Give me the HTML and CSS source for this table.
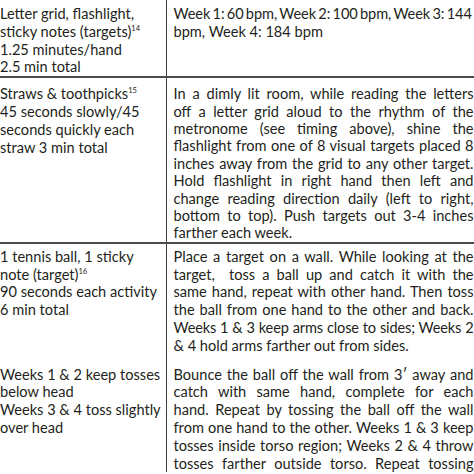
FILE: index.html
```html
<!DOCTYPE html>
<html>
<head>
<meta charset="utf-8">
<link rel="stylesheet" href="styles.css">
</head>
<body>
<div class="page">
  <table class="grid">
    <colgroup><col class="col-a"><col class="col-b"></colgroup>
    <tr class="row row-1">
      <td class="left">Letter grid, flashlight,<br>sticky notes (targets)<sup>14</sup><br>1.25 minutes/hand<br>2.5 min total</td>
      <td class="right">
        <span class="ln narrow">Week 1: 60 bpm, Week 2: 100 bpm, Week 3: 144</span>
        <span class="ln">bpm, Week 4: 184 bpm</span>
      </td>
    </tr>
    <tr class="row row-2">
      <td class="left">Straws &amp; toothpicks<sup>15</sup><br>45 seconds slowly/45<br>seconds quickly each<br>straw 3 min total</td>
      <td class="right">
        <span class="ln j">In a dimly lit room, while reading the letters</span>
        <span class="ln j">off a letter grid aloud to the rhythm of the</span>
        <span class="ln j">metronome (see timing above), shine the</span>
        <span class="ln j">flashlight from one of 8 visual targets placed 8</span>
        <span class="ln j">inches away from the grid to any other target.</span>
        <span class="ln j">Hold flashlight in right hand then left and</span>
        <span class="ln j">change reading direction daily (left to right,</span>
        <span class="ln j">bottom to top). Push targets out 3-4 inches</span>
        <span class="ln">farther each week.</span>
      </td>
    </tr>
    <tr class="row row-3">
      <td class="left">1 tennis ball, 1 sticky<br>note (target)<sup>16</sup><br>90 seconds each activity<br>6 min total</td>
      <td class="right">
        <span class="ln j">Place a target on a wall. While looking at the</span>
        <span class="ln j">target,&nbsp; toss a ball up and catch it with the</span>
        <span class="ln j">same hand, repeat with other hand. Then toss</span>
        <span class="ln j">the ball from one hand to the other and back.</span>
        <span class="ln j tight">Weeks 1 &amp; 3 keep arms close to sides; Weeks 2</span>
        <span class="ln">&amp; 4 hold arms farther out from sides.</span>
      </td>
    </tr>
    <tr class="row row-4">
      <td class="left">Weeks 1 &amp; 2 keep tosses<br>below head<br>Weeks 3 &amp; 4 toss slightly<br>over head</td>
      <td class="right">
        <span class="ln j">Bounce the ball off the wall from 3′ away and</span>
        <span class="ln j">catch with same hand, complete for each</span>
        <span class="ln j">hand. Repeat by tossing the ball off the wall</span>
        <span class="ln j">from one hand to the other. Weeks 1 &amp; 3 keep</span>
        <span class="ln j">tosses inside torso region; Weeks 2 &amp; 4 throw</span>
        <span class="ln j">tosses farther outside torso. Repeat tossing</span>
      </td>
    </tr>
  </table>
</div>
</body>
</html>
```
FILE: styles.css
```css
html, body {
  margin: 0;
  padding: 0;
  background: #ffffff;
}
.page {
  width: 474px;
  height: 474px;
  overflow: hidden;
}
.grid {
  border-collapse: collapse;
  table-layout: fixed;
  width: 474px;
  font-family: "Lato", "Liberation Sans", sans-serif;
  font-size: 14.6px;
  line-height: 17.8px;
  color: #231f20;
}
.col-a { width: 166px; }
.col-b { width: 308px; }
.left, .right {
  vertical-align: top;
  padding: 4px 0 0 0;
}
.left {
  border-right: 1px solid #3a3a3a;
  padding-left: 0;
  white-space: nowrap;
}
.right {
  padding-left: 7px;
}
.row-1 .left, .row-1 .right { padding-top: 5px; padding-bottom: 0; }
.row-1, .row-2 { border-bottom: 2px solid #4a4a4a; }
.row-2 .left, .row-2 .right { padding-top: 7px; padding-bottom: 0; }
.row-2 .right .ln { line-height: 17.4px; }
.row-3 .left, .row-3 .right { padding-bottom: 7px; }
.ln {
  display: block;
  width: 300px;
  white-space: nowrap;
}
.ln.j {
  text-align: justify;
  text-align-last: justify;
}
.ln.narrow { word-spacing: -1.3px; letter-spacing: -0.1px; }
.ln.tight { letter-spacing: -0.15px; }
sup {
  font-size: 7.5px;
  line-height: 0;
  vertical-align: 6px;
}
```
